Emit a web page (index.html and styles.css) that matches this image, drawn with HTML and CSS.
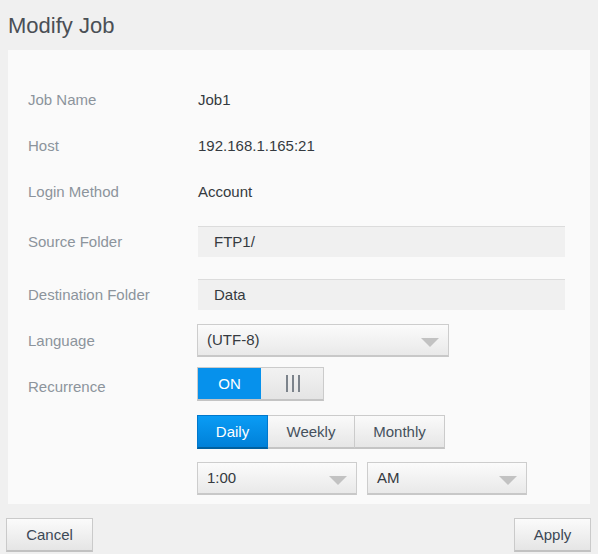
FILE: index.html
```html
<!DOCTYPE html>
<html>
<head>
<meta charset="utf-8">
<link rel="stylesheet" href="styles.css">
</head>
<body>
<div class="page">
  <h1 class="title">Modify Job</h1>
  <div class="panel">
    <div class="row row-text"><div class="label">Job Name</div><div class="value">Job1</div></div>
    <div class="row row-text"><div class="label">Host</div><div class="value">192.168.1.165:21</div></div>
    <div class="row row-text"><div class="label">Login Method</div><div class="value">Account</div></div>
    <div class="row row-src"><div class="label">Source Folder</div><div class="input">FTP1/</div></div>
    <div class="row row-dst"><div class="label">Destination Folder</div><div class="input">Data</div></div>
    <div class="row row-lang"><div class="label">Language</div>
      <div class="select select-lang"><span>(UTF-8)</span><span class="arrow"></span></div>
    </div>
    <div class="row row-rec"><div class="label">Recurrence</div>
      <div class="toggle"><div class="toggle-on">ON</div><div class="toggle-off"><i></i><i></i><i></i></div></div>
    </div>
    <div class="row row-seg"><div class="label"></div>
      <div class="seg">
        <div class="seg-btn seg-daily active">Daily</div>
        <div class="seg-btn seg-weekly">Weekly</div>
        <div class="seg-btn seg-monthly">Monthly</div>
      </div>
    </div>
    <div class="row row-time"><div class="label"></div>
      <div class="select select-time"><span>1:00</span><span class="arrow"></span></div>
      <div class="select select-time select-ampm"><span>AM</span><span class="arrow"></span></div>
    </div>
  </div>
  <div class="footer">
    <div class="btn btn-cancel">Cancel</div>
    <div class="btn btn-apply">Apply</div>
  </div>
</div>
</body>
</html>
```

FILE: styles.css
```css
* { box-sizing: border-box; }
html, body { margin: 0; padding: 0; }
body {
  background: #f0f0f0;
  font-family: "Liberation Sans", Arial, sans-serif;
  width: 598px;
  height: 554px;
  overflow: hidden;
}
.page { display: flex; flex-direction: column; }
.title {
  margin: 0;
  height: 50px;
  padding: 13px 0 0 8px;
  font-size: 22px;
  font-weight: normal;
  color: #4a4f55;
  line-height: 25px;
}
.panel {
  margin: 0 8px;
  background: #fafafa;
  padding: 26px 0 4px 20px;
  display: flex;
  flex-direction: column;
}
.row { display: flex; align-items: center; }
.row-text { height: 46px; }
.row-src { height: 54px; }
.row-dst { height: 52px; }
.row-lang { height: 40px; }
.row-rec { height: 48px; }
.row-seg { height: 48px; }
.row-time { height: 44px; }
.label {
  width: 169px;
  flex: none;
  font-size: 15px;
  color: #8c949c;
}
.row-rec .label { padding-top: 4px; }
.value {
  padding-left: 1px;
  font-size: 15px;
  color: #353a40;
}
.input {
  margin-left: 1px;
  width: 367px;
  height: 31px;
  background: #f0f0f0;
  border-top: 1px solid #dcdcdc;
  padding-left: 16px;
  display: flex;
  align-items: center;
  font-size: 15px;
  color: #353a40;
}
.select {
  height: 33px;
  border: 1px solid #cdcdcd;
  border-bottom: 2px solid #c8c8c8;
  background: linear-gradient(#fbfbfb, #e9e9e9);
  display: flex;
  align-items: center;
  justify-content: space-between;
  padding: 0 9px 0 9px;
  font-size: 15px;
  color: #353a40;
}
.select-lang { width: 252px; }
.select-time { width: 160px; }
.select-ampm { margin-left: 10px; }
.arrow {
  width: 0;
  height: 0;
  border-left: 9px solid transparent;
  border-right: 9px solid transparent;
  border-top: 9px solid #c2c2c2;
  margin-top: 6px;
}
.toggle {
  width: 127px;
  height: 34px;
  border: 1px solid #cbcbcb;
  border-bottom: 2px solid #c4c4c4;
  display: flex;
  background: linear-gradient(#f2f2f2, #e4e4e4);
}
.toggle-on {
  width: 63px;
  background: #0691ec;
  color: #fff;
  font-size: 15px;
  display: flex;
  align-items: center;
  justify-content: center;
}
.toggle-off {
  flex: 1;
  display: flex;
  align-items: center;
  justify-content: center;
  gap: 4px;
  padding-left: 2px;
}
.toggle-off i {
  display: block;
  width: 2px;
  height: 17px;
  background: #7c838b;
}
.seg { display: flex; height: 34px; }
.seg-btn {
  height: 34px;
  border: 1px solid #cbcbcb;
  border-bottom: 2px solid #c4c4c4;
  background: linear-gradient(#fafafa, #e6e6e6);
  display: flex;
  align-items: center;
  justify-content: center;
  font-size: 15px;
  color: #45505c;
}
.seg-btn + .seg-btn { border-left: none; }
.seg-daily { width: 71px; }
.seg-weekly { width: 87px; }
.seg-monthly { width: 90px; }
.seg-btn.active {
  background: linear-gradient(#0a9cf5, #0080d8);
  border-color: #0078cc;
  border-bottom: 2px solid #00609f;
  color: #fff;
}
.footer {
  display: flex;
  justify-content: space-between;
  padding: 14px 7px 0 6px;
}
.btn {
  height: 34px;
  border: 1px solid #cacaca;
  border-bottom: 2px solid #c2c2c2;
  background: linear-gradient(#fbfbfb, #e5e5e5);
  display: flex;
  align-items: center;
  justify-content: center;
  font-size: 15px;
  color: #3c4856;
}
.btn-cancel { width: 87px; }
.btn-apply { width: 77px; }
```
